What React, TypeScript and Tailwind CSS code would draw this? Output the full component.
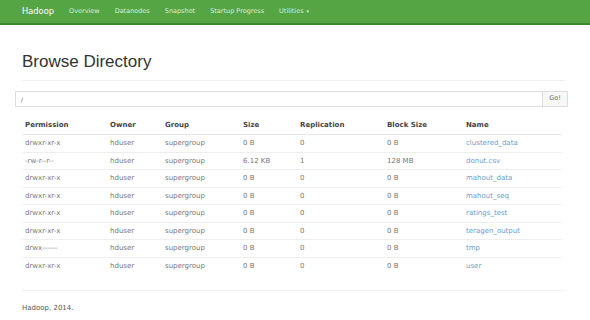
const navLinks = ['Overview', 'Datanodes', 'Snapshot', 'Startup Progress'];

interface Entry {
  permission: string;
  size: string;
  replication: string;
  blockSize: string;
  name: string;
}

const entries: Entry[] = [
  { permission: 'drwxr-xr-x', size: '0 B', replication: '0', blockSize: '0 B', name: 'clustered_data' },
  { permission: '-rw-r--r--', size: '6.12 KB', replication: '1', blockSize: '128 MB', name: 'donut.csv' },
  { permission: 'drwxr-xr-x', size: '0 B', replication: '0', blockSize: '0 B', name: 'mahout_data' },
  { permission: 'drwxr-xr-x', size: '0 B', replication: '0', blockSize: '0 B', name: 'mahout_seq' },
  { permission: 'drwxr-xr-x', size: '0 B', replication: '0', blockSize: '0 B', name: 'ratings_test' },
  { permission: 'drwxr-xr-x', size: '0 B', replication: '0', blockSize: '0 B', name: 'teragen_output' },
  { permission: 'drwx------', size: '0 B', replication: '0', blockSize: '0 B', name: 'tmp' },
  { permission: 'drwxr-xr-x', size: '0 B', replication: '0', blockSize: '0 B', name: 'user' },
];

// column template shared by header and rows
const cols = 'grid grid-cols-[85px_55px_78px_57px_87px_79px_99px]';

export default function App() {
  return (
    <div className="w-[590px] h-[320px] overflow-hidden bg-white font-['DejaVu_Sans',sans-serif] text-[7px] text-[#777]">
      {/* navbar */}
      <div className="h-[25px] bg-[#55a545] border-b-2 border-[#3f8a31] flex items-center pl-[22px]">
        <span className="text-[8.3px] text-white mr-[15px]">Hadoop</span>
        <div className="flex items-center gap-[15px] text-[6.5px] text-[#d9eed4]">
          {navLinks.map((l) => (
            <span key={l}>{l}</span>
          ))}
          <span className="flex items-center gap-[3px]">
            Utilities
            <span className="text-[5px]">▾</span>
          </span>
        </div>
      </div>

      {/* heading */}
      <div className="mx-[22px] mt-[27px] pb-[8px] border-b border-[#eee] w-[543px]">
        <h1 className="font-['Liberation_Sans',sans-serif] text-[17px] leading-[20px] text-[#333]">
          Browse Directory
        </h1>
      </div>

      {/* path bar */}
      <div className="ml-[15px] mt-[10px] flex h-[16px] w-[553px]">
        <div className="flex-1 border border-[#ddd] flex items-center pl-[5px] text-[6px] text-[#555]">/</div>
        <div className="w-[25px] border border-l-0 border-[#ddd] bg-[#f8f8f8] flex items-center justify-center text-[6.5px] text-[#666]">
          Go!
        </div>
      </div>

      {/* listing */}
      <div className="ml-[22px] mt-[10px] w-[540px]">
        <div className={`${cols} h-[18px] items-center font-bold text-[#444] border-b border-[#e6e6e6]`}>
          {['Permission', 'Owner', 'Group', 'Size', 'Replication', 'Block Size', 'Name'].map((h) => (
            <div key={h} className="pl-[3px]">{h}</div>
          ))}
        </div>
        {entries.map((e) => (
          <div key={e.name} className={`${cols} h-[17.5px] items-center border-b border-[#eee] last:border-b-0`}>
            <div className="pl-[3px]">{e.permission}</div>
            <div className="pl-[3px]">hduser</div>
            <div className="pl-[3px]">supergroup</div>
            <div className="pl-[3px]">{e.size}</div>
            <div className="pl-[3px]">{e.replication}</div>
            <div className="pl-[3px]">{e.blockSize}</div>
            <div className="pl-[3px] text-[#6b9ccf]">{e.name}</div>
          </div>
        ))}
      </div>

      {/* footer */}
      <div className="mx-[22px] mt-[15px] border-t border-[#f0f0f0] w-[543px] pt-[12px] text-[#555]">
        Hadoop, 2014.
      </div>
    </div>
  );
}
